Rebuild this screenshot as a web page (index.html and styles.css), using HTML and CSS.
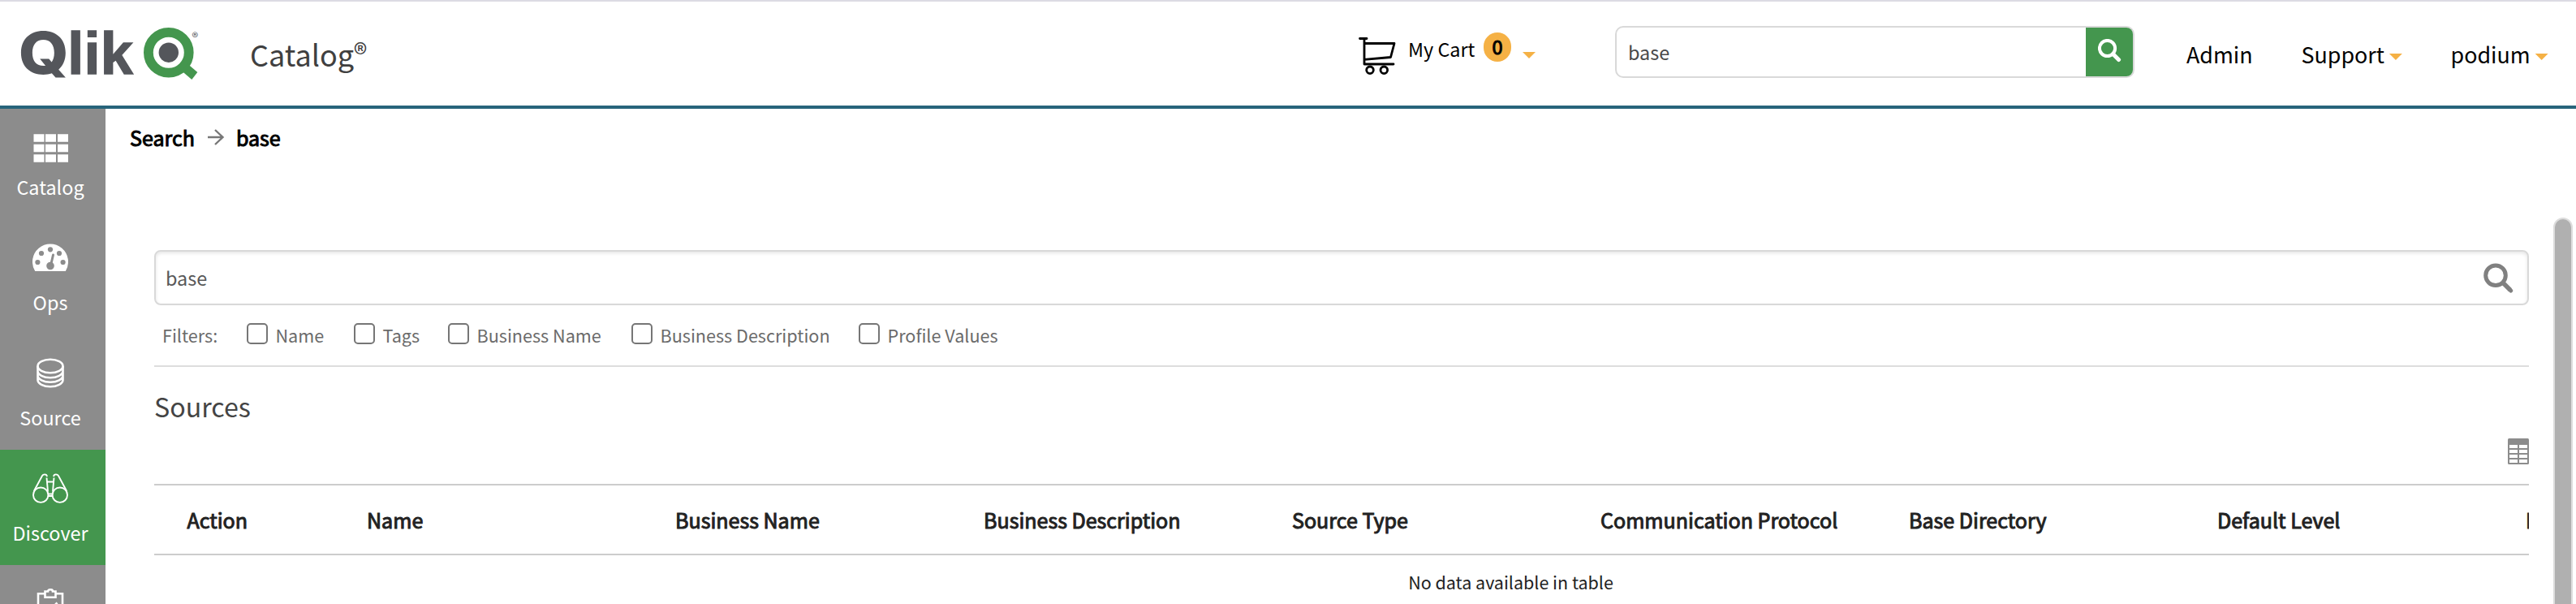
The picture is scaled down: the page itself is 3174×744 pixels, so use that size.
FILE: index.html
```html
<!DOCTYPE html>
<html lang="en">
<head>
  <meta charset="utf-8">
  <title>Qlik Catalog</title>
  <link rel="stylesheet" href="styles.css">
</head>
<body>

  <header class="header">
    <svg class="logo" width="250" height="68" viewBox="0 0 250 68">
      <text class="logo-q" transform="translate(22.800 56.700) scale(1.100 1)">Q</text>
      <text class="logo-text" x="83.200 103.400 123.700" y="57">lik</text>
      <circle cx="207.800" cy="30.700" r="12.200" fill="#54565b"/>
      <circle cx="207.800" cy="30.700" r="24.900" fill="none" stroke="#44964e" stroke-width="11.800"/>
      <path d="M231 44.500L243.300 55 236.300 64 224 53.600z" fill="#44964e"/>
      <text class="logo-reg" x="236.600" y="17.500">®</text>
    </svg>
    <span class="product">Catalog<span class="reg">®</span></span>

    <div class="cart">
      <svg class="cart-icon" width="46" height="47" viewBox="0 0 46 47">
        <path d="M1.500 1.500h8.500M7 1.500v31.500h36M7 7.500h37l-4.500 17-32.500 2.800"/>
        <circle cx="14" cy="40.300" r="4.300"/>
        <circle cx="31.300" cy="40.300" r="4.300"/>
      </svg>
      <span class="cart-label">My Cart</span>
      <span class="badge">0</span>
      <i class="caret"></i>
    </div>

    <div class="quick-search">
      <span class="quick-value">base</span>
      <span class="quick-btn">
        <svg width="29" height="29" viewBox="0 0 29 29" fill="none" stroke="#fff">
          <circle cx="11.500" cy="11.500" r="9.600" stroke-width="4"/>
          <path d="M18.500 18.500l7 7" stroke-width="5" stroke-linecap="round"/>
        </svg>
      </span>
    </div>

    <nav class="user-nav">
      <span>Admin</span>
      <span>Support<i class="caret"></i></span>
      <span>podium<i class="caret"></i></span>
    </nav>
  </header>

  <div class="layout">
    <aside class="sidebar">
      <div class="side-item">
        <svg width="44" height="44" viewBox="0 -7.300 44 44" fill="#fff">
          <path d="M1.500 1h13v9.500h-13zM16 1h13v9.500H16zM31 1h13v9.500H31zM1.500 13.500h13V23h-13zM16 13.500h13V23H16zM31 13.500h13V23H31zM1.500 26h13v9.500h-13zM16 26h13v9.500H16zM31 26h13v9.500H31z"/>
        </svg>
        <span>Catalog</span>
      </div>
      <div class="side-item">
        <svg width="44" height="44" viewBox="0 0 44 44">
          <path d="M3.200 35A22 22 0 1 1 40.800 35z" fill="#fff"/>
          <g fill="#8c8c8c">
            <circle cx="6.400" cy="24" r="3.100"/>
            <circle cx="11" cy="13" r="3.100"/>
            <circle cx="22" cy="8.300" r="3.100"/>
            <circle cx="33" cy="13" r="3.100"/>
            <circle cx="37.600" cy="24" r="3.100"/>
            <circle cx="22" cy="28.500" r="4.800"/>
          </g>
          <path d="M22.500 28l3-13" stroke="#8c8c8c" stroke-width="3" stroke-linecap="round"/>
        </svg>
        <span>Ops</span>
      </div>
      <div class="side-item">
        <svg width="44" height="44" viewBox="0 0 44 44" fill="none" stroke="#fff" stroke-width="2.600">
          <ellipse cx="22" cy="10" rx="15.500" ry="8.200"/>
          <path d="M6.500 10v17c0 4.500 7 8.200 15.500 8.200s15.500-3.700 15.500-8.200V10M6.500 16c0 4.500 7 8.200 15.500 8.200s15.500-3.700 15.500-8.200M6.500 21.500c0 4.500 7 8.200 15.500 8.200s15.500-3.700 15.500-8.200"/>
        </svg>
        <span>Source</span>
      </div>
      <div class="side-item active">
        <svg width="44" height="44" viewBox="0 0 44 44" fill="none" stroke="#fff" stroke-width="1.900">
          <circle cx="10.200" cy="26.700" r="9.200"/>
          <circle cx="33.800" cy="26.700" r="9.200"/>
          <path d="M1.800 22L11.500 4c1.500-3.500 6-3.500 6.500 0M42.200 22L32.500 4c-1.500-3.500-6-3.500-6.500 0M17.500 5.500l1.500 17M26.500 5.500l-1.500 17M18.500 10.500h7M19 25.500h6M19 28h6"/>
        </svg>
        <span>Discover</span>
      </div>
      <div class="side-item">
        <svg width="44" height="44" viewBox="0 0 44 44" fill="none" stroke="#fff" stroke-width="2.600">
          <path d="M14.500 6.300H7v40M29.500 6.300H37v40M15.500 10.800V3.500h3.500c0-3 6-3 6 0h3.500v7.300zM20 28l10.500-10.500"/>
        </svg>
      </div>
    </aside>

    <main class="content">
      <div class="breadcrumb">
        <span>Search</span>
        <svg width="21" height="20" viewBox="0 0 21 20" fill="none" stroke="#777" stroke-width="2.400">
          <path d="M0 10h19M9 1l9.500 9L9 19"/>
        </svg>
        <span>base</span>
      </div>

      <div class="search-box">
        <span>base</span>
        <svg width="37" height="37" viewBox="0 0 37 37" fill="none" stroke="#808080">
          <circle cx="15" cy="15.300" r="12.300" stroke-width="5"/>
          <path d="M24 24.300l9 9" stroke-width="5.500"/>
          <path d="M32.700 33l1 1" stroke-width="5" stroke-linecap="round"/>
        </svg>
      </div>

      <div class="filters">
        <span>Filters:</span>
        <label><input type="checkbox">Name</label>
        <label><input type="checkbox">Tags</label>
        <label><input type="checkbox">Business Name</label>
        <label><input type="checkbox">Business Description</label>
        <label><input type="checkbox">Profile Values</label>
      </div>

      <h2>Sources</h2>

      <div class="table-tools">
        <svg width="26" height="32" viewBox="0 0 26 32">
          <rect width="26" height="32" rx="1.500" fill="#8c8c8c"/>
          <path d="M2 8h10v4H2zM14 8h10v4H14zM2 14h10v4H2zM14 14h10v4H14zM2 20h10v4H2zM14 20h10v4H14zM2 26h10v4H2zM14 26h10v4H14z" fill="#fff"/>
        </svg>
      </div>

      <div class="table-wrap">
        <table>
          <tr>
            <th class="col-action">Action</th>
            <th>Name</th>
            <th>Business Name</th>
            <th>Business Description</th>
            <th>Source Type</th>
            <th>Communication Protocol</th>
            <th>Base Directory</th>
            <th>Default Level</th>
            <th class="col-last">I</th>
          </tr>
          <tr>
            <td colspan="9">No data available in table</td>
          </tr>
        </table>
      </div>
    </main>

    <div class="scroll-thumb"></div>
  </div>

</body>
</html>
```
FILE: styles.css
```css
* {
  box-sizing: border-box;
}

body {
  margin: 0;
  height: 744px;
  overflow: hidden;
  background: #fff;
  color: #000;
  font-family: "Noto Sans CJK SC", "Noto Sans", sans-serif;
  font-size: 23.4px;
  line-height: 34px;
}

svg {
  display: block;
  flex: none;
}

/* header */
.header {
  display: flex;
  align-items: flex-start;
  height: 134px;
  border-top: 2px solid #dcdbe3;
  border-bottom: 4px solid #27647b;
}

.logo {
  margin-top: 32px;
  overflow: visible;
  fill: #54565b;
}

.logo-q {
  font-family: Inter, sans-serif;
  font-weight: 800;
  font-size: 72px;
}

.logo-text {
  font-family: "Liberation Sans", sans-serif;
  font-weight: bold;
  font-size: 72px;
  stroke: #54565b;
  stroke-width: 1.4;
}

.logo-reg {
  font-size: 16px;
}

.product {
  flex: none;
  display: flex;
  width: 1366px;
  margin: 38px 0 0 58px;
  font-size: 36px;
  line-height: 52px;
  color: #404040;
}

.reg {
  margin-top: -1px;
  font-size: 34px;
}

.cart {
  flex: none;
  display: flex;
  align-items: flex-start;
  width: 316px;
}

.cart-icon {
  margin-top: 44px;
  fill: none;
  stroke: #000;
  stroke-width: 2.8;
  stroke-linecap: round;
  stroke-linejoin: round;
}

.cart-label {
  width: 93px;
  margin: 41px 0 0 15px;
}

.badge {
  width: 34px;
  height: 36px;
  margin-top: 38px;
  border-radius: 17px;
  background: #f5b145;
  text-align: center;
  -webkit-text-stroke: 1px #000;
}

.caret {
  display: block;
  flex: none;
  width: 16px;
  height: 8px;
  background: #f5b145;
  clip-path: polygon(0 0, 100% 0, 50% 100%);
}

.cart .caret {
  margin: 62px 0 0 14px;
}

.quick-search {
  flex: none;
  display: flex;
  align-items: center;
  justify-content: space-between;
  width: 640px;
  height: 64px;
  margin-top: 30px;
  padding-left: 14px;
  border: 2px solid #d9d9d9;
  border-radius: 10px;
  overflow: hidden;
  color: #4a4a4a;
}

.quick-btn {
  width: 58px;
  height: 60px;
  padding: 14px 0 0 15px;
  background: #44964e;
}

.user-nav {
  display: grid;
  grid-template-columns: 141.5px 184px auto;
  margin: 48px 0 0 64px;
  font-size: 26.85px;
}

.user-nav span {
  display: flex;
}

.user-nav .caret {
  margin: 16px 0 0 6px;
}

/* sidebar */
.layout {
  display: flex;
  height: 610px;
  overflow: hidden;
}

.sidebar {
  flex: none;
  width: 130px;
  overflow: hidden;
  background: #8c8c8c;
  color: #fff;
}

.side-item {
  display: flex;
  flex-direction: column;
  align-items: center;
  gap: 12px;
  height: 142px;
  padding: 29px 6px 0 0;
}

.side-item:first-child {
  margin-top: -6px;
}

.active {
  background: #44964e;
}

/* content */
.content {
  flex: none;
  width: 2986px;
  padding: 17px 0 0 60px;
}

.breadcrumb {
  display: flex;
  height: 157px;
  margin-left: -30px;
  font-size: 25.06px;
  line-height: 36px;
  -webkit-text-stroke: 1px #000;
}

.breadcrumb svg {
  margin: 8px 14px 0 16px;
}

.search-box {
  display: flex;
  align-items: center;
  justify-content: space-between;
  height: 68px;
  padding: 0 17px 0 12px;
  border: 2px solid #d9d9d9;
  border-radius: 8px;
  box-shadow: inset 0 2px 4px rgba(0, 0, 0, 0.1);
  color: #595959;
}

.filters {
  display: grid;
  grid-template-columns: 104px 132px 116px 226px 280px auto;
  height: 76px;
  padding: 21px 0 0 10px;
  border-bottom: 2px solid #ddd;
  font-size: 21.6px;
  line-height: 32px;
  color: #6b6b6b;
}

.filters label {
  display: flex;
}

.filters input {
  appearance: none;
  flex: none;
  width: 26px;
  height: 26px;
  margin: 1px 9.5px 0 0;
  border: 2px solid #767676;
  border-radius: 5px;
}

h2 {
  margin: 25px 0 17px;
  font-size: 32.2px;
  font-weight: normal;
  line-height: 46px;
  color: #444;
}

.table-tools {
  display: flex;
  justify-content: flex-end;
  margin-bottom: 24px;
}

.table-wrap {
  height: 148px;
  overflow: hidden;
}

table {
  table-layout: fixed;
  width: 3343px;
  border-spacing: 0;
  color: #222;
}

th {
  width: 380px;
  height: 88px;
  padding: 0 0 1px 40.5px;
  border-top: 2px solid #ccc;
  border-bottom: 2px solid #ccc;
  font-size: 25.06px;
  font-weight: normal;
  line-height: 36px;
  text-align: left;
  -webkit-text-stroke: 1px #222;
}

.col-action {
  width: 221.5px;
}

.col-last {
  width: auto;
}

td {
  padding: 17px 0 0;
  font-size: 21.48px;
  line-height: 32px;
  text-align: center;
}

/* scrollbar */
.scroll-thumb {
  width: 24px;
  height: 600px;
  margin: 134px 0 0 30px;
  border: 2px solid #ddd;
  border-radius: 12px;
  background: #b0b0b0;
}
```
